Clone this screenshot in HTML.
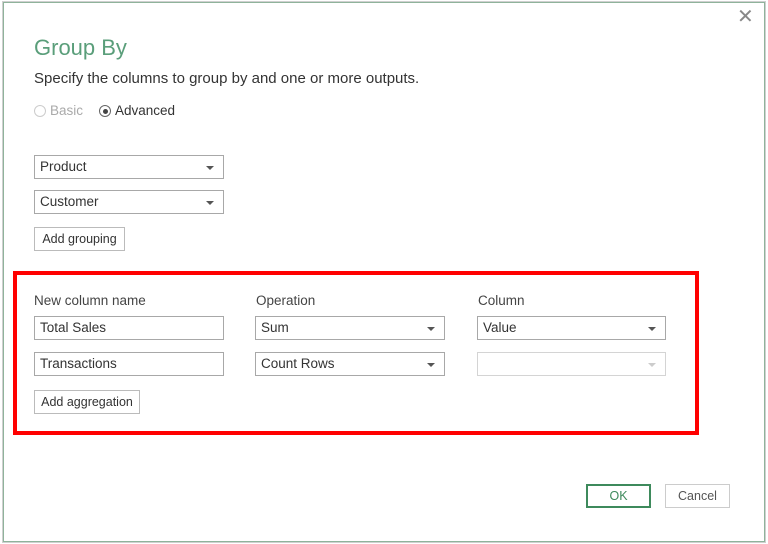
<!DOCTYPE html>
<html><head><style>
body{margin:0;width:768px;height:544px;background:#fff;position:relative;overflow:hidden;font-family:"Liberation Sans",sans-serif;}
.a{position:absolute;}
.dlg{left:3px;top:2px;width:760px;height:538px;border:1px solid #8fb39b;box-shadow:0 0 0 1px #d0d0d0;background:#fff;}
.f{position:absolute;border:1px solid #a8a8a8;background:#fff;height:22px;box-sizing:border-box;height:24px;font-size:13.5px;color:#333;padding:3px 0 0 5px;}
.f .ar{position:absolute;right:9px;top:10px;width:0;height:0;border-left:4px solid transparent;border-right:4px solid transparent;border-top:4px solid #555;}
.b{position:absolute;border:1px solid #bbb;background:#fff;box-sizing:border-box;height:24px;font-size:12.5px;color:#333;text-align:center;padding-top:4px;}
.l{position:absolute;font-size:13.5px;color:#444;}
</style></head><body>
<div class="a dlg"></div>
<div class="a" style="left:737px;top:4px;font-size:20px;color:#888;">&#x2715;</div>
<div class="a" style="left:34px;top:35px;font-size:22px;color:#5a9e7a;">Group By</div>
<div class="a" style="left:34px;top:70px;font-size:15px;color:#333;">Specify the columns to group by and one or more outputs.</div>
<div class="a" style="left:34px;top:105px;width:10px;height:10px;border:1px solid #ccc;border-radius:50%;"></div>
<div class="a" style="left:50px;top:103px;font-size:13.5px;color:#aaa;">Basic</div>
<div class="a" style="left:99px;top:105px;width:10px;height:10px;border:1px solid #666;border-radius:50%;"></div>
<div class="a" style="left:102.5px;top:108.5px;width:5px;height:5px;background:#444;border-radius:50%;"></div>
<div class="a" style="left:115px;top:103px;font-size:13.5px;color:#333;">Advanced</div>
<div class="f" style="left:34px;top:155px;width:190px;">Product<span class="ar"></span></div>
<div class="f" style="left:34px;top:190px;width:190px;">Customer<span class="ar"></span></div>
<div class="b" style="left:34px;top:227px;width:91px;">Add grouping</div>
<div class="a" style="left:13px;top:271px;width:678px;height:156px;border:4px solid #f00;"></div>
<div class="l" style="left:34px;top:293px;">New column name</div>
<div class="l" style="left:256px;top:293px;">Operation</div>
<div class="l" style="left:478px;top:293px;">Column</div>
<div class="f" style="left:34px;top:316px;width:190px;">Total Sales</div>
<div class="f" style="left:34px;top:352px;width:190px;">Transactions</div>
<div class="f" style="left:255px;top:316px;width:190px;">Sum<span class="ar"></span></div>
<div class="f" style="left:255px;top:352px;width:190px;">Count Rows<span class="ar"></span></div>
<div class="f" style="left:477px;top:316px;width:189px;">Value<span class="ar"></span></div>
<div class="f" style="left:477px;top:352px;width:189px;border-color:#d4d4d4;"><span class="ar" style="border-top-color:#ccc"></span></div>
<div class="b" style="left:34px;top:390px;width:106px;">Add aggregation</div>
<div class="b" style="left:586px;top:484px;width:65px;border:2px solid #3e8a5c;color:#3e8a5c;padding-top:3px;">OK</div>
<div class="b" style="left:665px;top:484px;width:65px;border-color:#ccc;color:#555;">Cancel</div>
</body></html>
